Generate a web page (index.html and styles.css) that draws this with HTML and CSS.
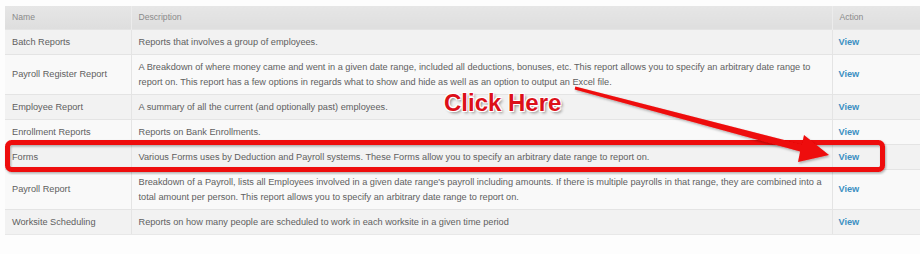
FILE: index.html
```html
<!DOCTYPE html>
<html>
<head>
<meta charset="utf-8">
<link rel="stylesheet" href="styles.css">
</head>
<body>
<div class="page">
  <table class="reports">
    <colgroup>
      <col class="c-name"><col class="c-desc"><col class="c-act">
    </colgroup>
    <thead>
      <tr><th>Name</th><th>Description</th><th>Action</th></tr>
    </thead>
    <tbody>
      <tr><td>Batch Reports</td><td>Reports that involves a group of employees.</td><td><a href="#">View</a></td></tr>
      <tr><td>Payroll Register Report</td><td>A Breakdown of where money came and went in a given date range, included all deductions, bonuses, etc. This report allows you to specify an arbitrary date range to report on. This report has a few options in regards what to show and hide as well as an option to output an Excel file.</td><td><a href="#">View</a></td></tr>
      <tr><td>Employee Report</td><td>A summary of all the current (and optionally past) employees.</td><td><a href="#">View</a></td></tr>
      <tr><td>Enrollment Reports</td><td>Reports on Bank Enrollments.</td><td><a href="#">View</a></td></tr>
      <tr><td>Forms</td><td>Various Forms uses by Deduction and Payroll systems. These Forms allow you to specify an arbitrary date range to report on.</td><td><a href="#">View</a></td></tr>
      <tr><td>Payroll Report</td><td>Breakdown of a Payroll, lists all Employees involved in a given date range's payroll including amounts. If there is multiple payrolls in that range, they are combined into a total amount per person. This report allows you to specify an arbitrary date range to report on.</td><td><a href="#">View</a></td></tr>
      <tr><td>Worksite Scheduling</td><td>Reports on how many people are scheduled to work in each worksite in a given time period</td><td><a href="#">View</a></td></tr>
    </tbody>
  </table>
  <svg class="overlay" width="920" height="254" viewBox="0 0 920 254">
    <defs>
      <filter id="sh" x="-5%" y="-20%" width="110%" height="140%">
        <feDropShadow dx="1" dy="1.5" stdDeviation="1.2" flood-color="#000" flood-opacity="0.3"/>
      </filter>
    </defs>
    <rect x="7.5" y="142.5" width="875" height="27" rx="4" ry="4" fill="none" stroke="#ee0a0a" stroke-width="5" filter="url(#sh)"/>
    <polygon points="575.3,86.6 801.9,144.6 804,135 829,155 798,162 800.1,151.4 574.7,89.4" fill="#ee0a0a" filter="url(#sh)"/>
  </svg>
  <span class="callout">Click Here</span>
</div>
</body>
</html>
```
FILE: styles.css
```css
html, body {
  margin: 0;
  padding: 0;
  background: #fdfdfd;
}
.page {
  position: relative;
  width: 920px;
  height: 254px;
  overflow: hidden;
  padding-top: 6px;
  box-sizing: border-box;
}
.reports {
  margin-left: 5px;
  width: 920px;
  border-collapse: collapse;
  table-layout: fixed;
  font-family: "Liberation Sans", Arial, sans-serif;
  font-size: 9.2px;
  color: #606060;
}
.c-name { width: 126px; }
.c-desc { width: 701px; }
.c-act { width: 93px; }
.reports th {
  height: 23px;
  padding: 0 7px;
  text-align: left;
  font-weight: normal;
  font-size: 8.6px;
  color: #8a8a8a;
  background: linear-gradient(#e6e6e6, #dedede);
  border-left: 1px solid #ececec;
  box-sizing: border-box;
}
.reports td {
  padding: 5px 7px 4px;
  line-height: 15px;
  height: 15px;
  vertical-align: middle;
  border-top: 1px solid #e4e4e4;
  border-left: 1px solid #e4e4e4;
}
.reports td:first-child, .reports th:first-child { border-left: none; }
.reports td:last-child { padding-left: 6px; }
.reports tbody tr:nth-child(odd) td { background: #f2f2f2; }
.reports tbody tr:nth-child(even) td { background: #f9f9f9; }
.reports tbody tr:last-child td { border-bottom: 1px solid #e8e8e8; }
.reports a {
  color: #3b8fc2;
  font-weight: bold;
  text-decoration: none;
}
.overlay {
  position: absolute;
  left: 0;
  top: 0;
  pointer-events: none;
}
.callout {
  position: absolute;
  left: 444px;
  top: 90px;
  font-family: "Liberation Sans", Arial, sans-serif;
  font-weight: bold;
  font-size: 24px;
  line-height: 25px;
  color: #dc1019;
  text-shadow: -1px -1px 0 #fff, 1px -1px 0 #fff, -1px 1px 0 #fff, 1px 1px 0 #fff, 2px 2px 3px rgba(0,0,0,0.45);
  white-space: nowrap;
}
```
